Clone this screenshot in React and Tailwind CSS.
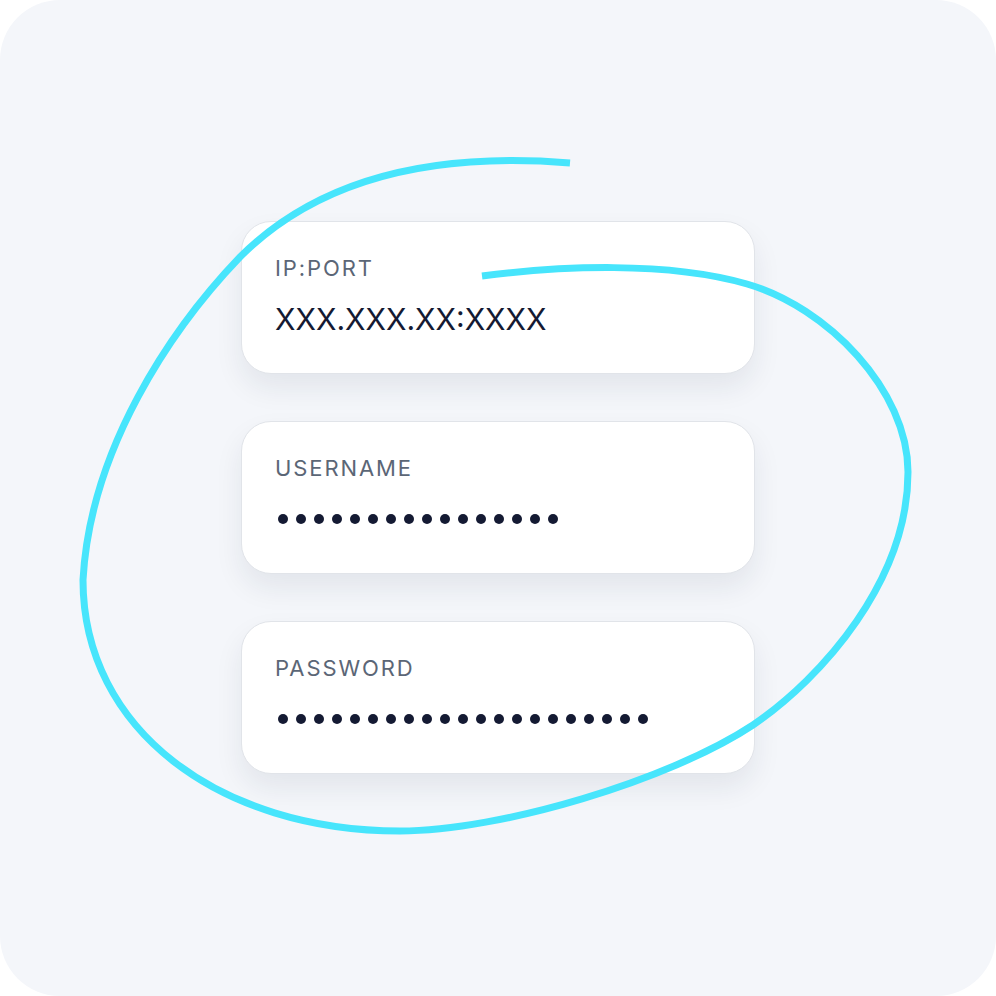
import React from "react";

// hand-fitted loop around the form
const curve =
  "M 570 163 C 460 154, 330 167, 240 257 " +
  "C 170 330, 90 450, 83 580 " +
  "C 83 730, 220 831, 400 831 " +
  "C 500 831, 670 780, 753 725 " +
  "C 823 677, 908 580, 908 472 " +
  "C 908 390, 827 307, 747 284 " +
  "C 667 261, 560 266, 482 276";

function Dots({ count }) {
  return (
    <div className="flex items-center gap-[8px] h-[38px] ml-[3px]">
      {Array.from({ length: count }).map((_, i) => (
        <span key={i} className="block w-[10px] h-[10px] rounded-full bg-[#141a33]" />
      ))}
    </div>
  );
}

function Field({ label, children }) {
  return (
    <div className="w-[514px] h-[153px] bg-white rounded-[30px] border border-[#e1e4e9] shadow-[0_14px_28px_rgba(30,40,60,0.08)] pl-[33px] pt-[32px]">
      <div className="text-[22px] leading-[28px] tracking-[1.9px] text-[#5b6676]">{label}</div>
      <div className="mt-[18px]">{children}</div>
    </div>
  );
}

export default function App() {
  return (
    <div className="w-[996px] h-[996px] bg-white" style={{ fontFamily: "Inter, 'Noto Sans', sans-serif" }}>
      <div className="relative w-full h-full rounded-[60px] bg-[#f4f6fa] flex flex-col items-center pt-[221px] gap-[47px]">
        <Field label="IP:PORT">
          <div className="h-[38px] text-[30px] leading-[38px] text-[#141a33]">XXX.XXX.XX:XXXX</div>
        </Field>
        <Field label="USERNAME">
          <Dots count={16} />
        </Field>
        <Field label="PASSWORD">
          <Dots count={21} />
        </Field>
        <svg className="absolute inset-0 pointer-events-none" width="996" height="996" viewBox="0 0 996 996">
          <path d={curve} fill="none" stroke="#47e5fc" strokeWidth="7" strokeLinecap="butt" />
        </svg>
      </div>
    </div>
  );
}
